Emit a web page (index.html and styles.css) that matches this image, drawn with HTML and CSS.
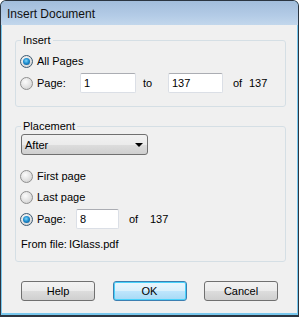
FILE: index.html
```html
<!DOCTYPE html>
<html lang="en">

<head>
  <meta charset="UTF-8">
  <title>Insert Document</title>
  <link rel="stylesheet" href="styles.css">
</head>

<body>
  <div class="window">
    <div class="titlebar">Insert Document</div>

    <div class="client">
      <fieldset class="group group-insert">
        <legend>Insert</legend>
        <div class="row row-first">
          <span class="radio checked"></span>
          <span class="label">All Pages</span>
        </div>
        <div class="row row-gap">
          <span class="radio"></span>
          <span class="label page-label">Page:</span>
          <input class="field field-from" type="text" value="1">
          <span class="to">to</span>
          <input class="field field-to" type="text" value="137">
          <span class="of">of</span>
          <span>137</span>
        </div>
      </fieldset>

      <fieldset class="group group-placement">
        <legend>Placement</legend>
        <div class="select">
          <span>After</span>
          <span class="arrow"></span>
        </div>
        <div class="row row-option">
          <span class="radio"></span>
          <span class="label">First page</span>
        </div>
        <div class="row row-tight">
          <span class="radio"></span>
          <span class="label">Last page</span>
        </div>
        <div class="row row-gap">
          <span class="radio checked"></span>
          <span class="label page-label-short">Page:</span>
          <input class="field field-page" type="text" value="8">
          <span class="of of-wide">of</span>
          <span>137</span>
        </div>
        <div class="row row-file">
          <span class="file-label">From file:</span>
          <span>IGlass.pdf</span>
        </div>
      </fieldset>

      <div class="buttons">
        <button class="btn">Help</button>
        <button class="btn btn-default">OK</button>
        <button class="btn">Cancel</button>
      </div>
    </div>
  </div>
</body>

</html>
```

FILE: styles.css
```css
/* Insert Document dialog */
body {
  margin: 0;
  padding: 0;
  background-color: #ffffff;
  font-family: "Liberation Sans", Arial, sans-serif;
  font-size: 11px;
  color: #000;
}

.window {
  width: 299px;
  height: 317px;
  box-sizing: border-box;
  border: 1px solid #2b3540;
  border-bottom-width: 2px;
  border-radius: 6px 6px 0 0;
  background-color: #79c8ee;
  padding: 0 1px 2px 1px;
  display: flex;
  flex-direction: column;
  overflow: hidden;
}

.titlebar {
  height: 24px;
  box-sizing: border-box;
  margin: 0 -1px;
  padding: 3px 0 0 6px;
  line-height: 20px;
  font-size: 12px;
  color: #101010;
  background: linear-gradient(#a2bddb, #b3cbe6 60%, #c2d7ec);
}

.client {
  flex: 1;
  background-color: #f0f0f0;
  padding: 9px 0 0 13px;
}

/* Group boxes */
.group {
  width: 271px;
  box-sizing: border-box;
  margin: 0;
  padding: 0 4px;
  border: 1px solid #d5dfe5;
  border-radius: 3px;
}

.group legend {
  margin-left: 1px;
  padding: 0 2px;
  line-height: 13px;
}

.group-insert {
  padding-bottom: 13px;
}

.group-placement {
  margin-top: 13px;
  padding-bottom: 7px;
}

.row {
  display: flex;
  align-items: center;
  height: 20px;
}

.row > span {
  flex-shrink: 0;
}

.row-first {
  margin-top: 4px;
}

.row-gap {
  margin-top: 2px;
}

.row-option {
  margin-top: 11px;
}

.row-tight {
  margin-top: 1px;
}

.row-file {
  margin-top: 5px;
  padding-left: 1px;
}

/* Radio buttons */
.radio {
  width: 13px;
  height: 13px;
  box-sizing: border-box;
  border: 1px solid #8f8f8f;
  border-radius: 50%;
  background: radial-gradient(circle at 40% 35%, #fbfbfb, #e6e6e6 45%, #c9c9c9);
  display: flex;
  align-items: center;
  justify-content: center;
  margin-right: 4px;
}

.radio.checked {
  border-color: #3d5a72;
}

.radio.checked::after {
  content: "";
  width: 7px;
  height: 7px;
  border-radius: 50%;
  background: radial-gradient(circle at 45% 40%, #7fd6fb, #1f8fd0 45%, #0a4680);
}

.page-label {
  width: 43px;
}

.page-label-short {
  width: 39px;
}

/* Text fields */
.field {
  height: 20px;
  box-sizing: border-box;
  margin: 0;
  padding: 0 3px;
  border: 1px solid #dbdfe6;
  border-top-color: #abadb3;
  border-radius: 2px;
  background-color: #fff;
  font-family: inherit;
  font-size: 11px;
  color: #000;
  outline: none;
  flex-shrink: 0;
}

.field-from {
  width: 56px;
}

.field-to {
  width: 55px;
}

.field-page {
  width: 43px;
}

.to {
  width: 32px;
  padding-left: 7px;
  box-sizing: border-box;
}

.of {
  width: 26px;
  padding-left: 10px;
  box-sizing: border-box;
}

.of-wide {
  width: 31px;
}

.file-label {
  width: 48px;
}

/* Dropdown */
.select {
  width: 127px;
  height: 21px;
  box-sizing: border-box;
  margin: 1px 0 0 1px;
  padding: 0 4px 0 3px;
  border: 1px solid #707070;
  border-radius: 3px;
  background: linear-gradient(#f2f2f2, #ebebeb 50%, #dddddd 50%, #cfcfcf);
  display: flex;
  align-items: center;
  justify-content: space-between;
}

.arrow {
  width: 0;
  height: 0;
  border-left: 4px solid transparent;
  border-right: 4px solid transparent;
  border-top: 4px solid #000;
}

/* Buttons */
.buttons {
  display: flex;
  gap: 17.5px;
  margin-top: 19px;
  padding-left: 6px;
}

.btn {
  width: 74px;
  height: 20px;
  box-sizing: border-box;
  padding: 0;
  border: 1px solid #707070;
  border-radius: 3px;
  background: linear-gradient(#f2f2f2, #ebebeb 50%, #dddddd 50%, #cfcfcf);
  font-family: inherit;
  font-size: 11px;
  color: #000;
}

.btn-default {
  border-color: #3c7fb1;
  background: linear-gradient(#eaf6fd, #d9f0fc 50%, #bee6fd 50%, #a7d9f5);
  box-shadow: inset 0 0 0 1px #48d2fb;
}
```
